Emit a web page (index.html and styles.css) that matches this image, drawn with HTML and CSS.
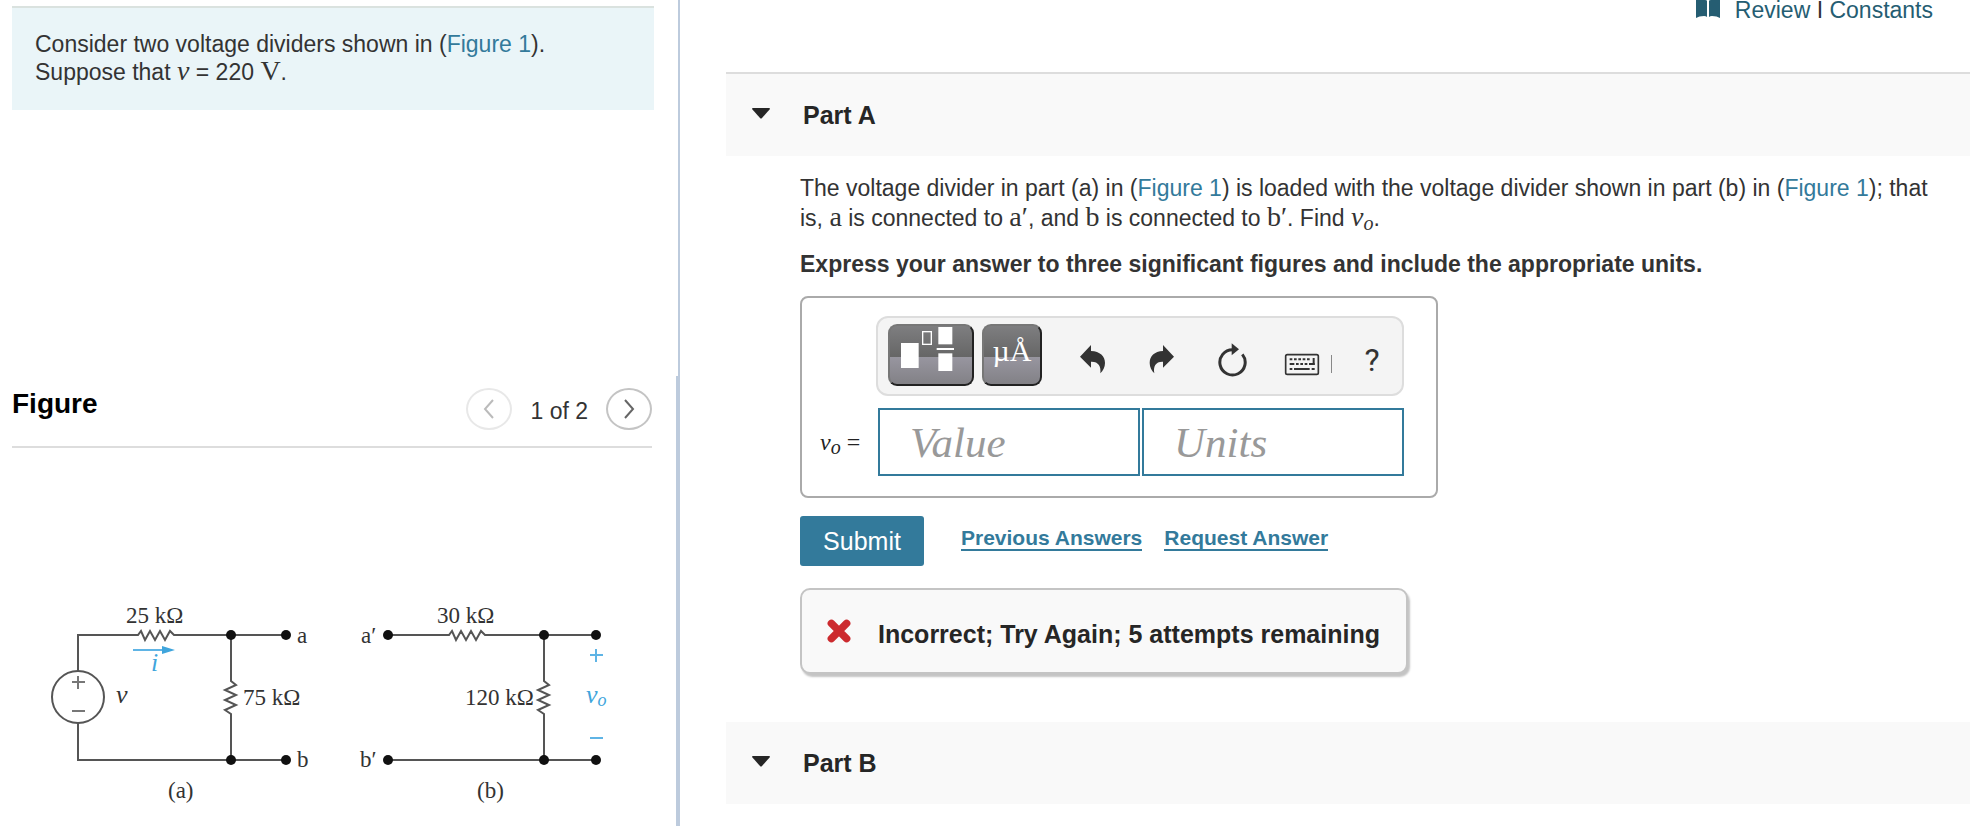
FILE: index.html
```html
<!DOCTYPE html>
<html lang="en">
<head>
  <meta charset="UTF-8">
  <title>Voltage Dividers</title>
  <link rel="stylesheet" href="styles.css">
</head>
<body>
  <div class="page">

    <!-- Problem statement and figure -->
    <aside class="sidebar">
      <div class="problem-pane">
        <div class="problem">
          <p>Consider two voltage dividers shown in (<a href="#figure">Figure 1</a>). Suppose that <i class="math">v</i> = 220 <span class="math">V</span>.</p>
        </div>
      </div>

      <section class="figure-pane" id="figure">
        <header class="figure-header">
          <h2>Figure</h2>
          <div class="pager">
            <button type="button" class="pager-button" aria-label="Previous figure" disabled>
              <svg viewBox="0 0 12 20"><path d="M10 1 L2 10 L10 19"/></svg>
            </button>
            <span class="pager-count">1 of 2</span>
            <button type="button" class="pager-button" aria-label="Next figure">
              <svg viewBox="0 0 12 20"><path d="M2 1 L10 10 L2 19"/></svg>
            </button>
          </div>
        </header>

        <svg class="circuit" viewBox="12 600 640 210" role="img" aria-label="Two voltage dividers">
          <!-- (a) -->
          <g class="wire">
            <path d="M78 671 V635 H138 l3 -4 4 9 5 -9 5 9 5 -9 5 9 5 -9 4 4 H286"/>
            <path d="M78 723 V760 H286"/>
            <path d="M231 635 V681 l5 4 -11 5 11 5 -11 5 11 5 -11 5 6 4 V760"/>
            <circle cx="78" cy="697" r="26"/>
          </g>
          <path class="sign" d="M72 682 h13 M78 676 v13 M72 711 h13"/>
          <g class="node">
            <circle cx="231" cy="635" r="5"/>
            <circle cx="286" cy="635" r="5"/>
            <circle cx="231" cy="760" r="5"/>
            <circle cx="286" cy="760" r="5"/>
          </g>
          <g class="blue-line">
            <path d="M133 650 h34"/>
            <path class="arrow-head" d="M162 646 L175 650 L162 654 Z"/>
          </g>
          <text x="126" y="623">25 kΩ</text>
          <text x="243" y="705">75 kΩ</text>
          <text x="116" y="703" class="var">v</text>
          <text x="151" y="671" class="var blue">i</text>
          <text x="297" y="643">a</text>
          <text x="297" y="767">b</text>
          <text x="168" y="798">(a)</text>

          <!-- (b) -->
          <g class="wire">
            <path d="M388 635 H449 l3 -4 4 9 5 -9 5 9 5 -9 5 9 5 -9 4 4 H596"/>
            <path d="M388 760 H596"/>
            <path d="M544 635 V681 l5 4 -11 5 11 5 -11 5 11 5 -11 5 6 4 V760"/>
          </g>
          <g class="node">
            <circle cx="388" cy="635" r="5"/>
            <circle cx="544" cy="635" r="5"/>
            <circle cx="596" cy="635" r="5"/>
            <circle cx="388" cy="760" r="5"/>
            <circle cx="544" cy="760" r="5"/>
            <circle cx="596" cy="760" r="5"/>
          </g>
          <path class="blue-line" d="M590 655 h13 M596 649 v13 M590 738 h13"/>
          <text x="437" y="623">30 kΩ</text>
          <text x="465" y="705">120 kΩ</text>
          <text x="361" y="643">a′</text>
          <text x="360" y="767">b′</text>
          <text x="477" y="798">(b)</text>
          <text x="586" y="703" class="var blue">v<tspan class="sub" dy="3">o</tspan></text>
        </svg>
      </section>
    </aside>

    <!-- Questions -->
    <main class="content">
      <nav class="resources">
        <svg class="book" viewBox="0 0 24 18">
          <path d="M0 0 H9 Q11 0 11 1 V17 Q10 16 8 16 Q3 16 0 18 Z"/>
          <path d="M24 0 H15 Q13 0 13 1 V17 Q14 16 16 16 Q21 16 24 18 Z"/>
        </svg>
        <a href="#">Review</a> I <a href="#">Constants</a>
      </nav>

      <section class="part">
        <header class="part-header part-header-first">
          <svg class="caret" viewBox="0 0 18 11"><path d="M1 0 H17 Q18 0 18 1 L10 10 Q9 11 8 10 L0 1 Q0 0 1 0 Z"/></svg>
          <h2>Part A</h2>
        </header>

        <div class="part-body">
          <p>The voltage divider in part (a) in (<a href="#figure">Figure 1</a>) is loaded with the voltage divider shown in part (b) in (<a href="#figure">Figure 1</a>); that is, <span class="math">a</span> is connected to <span class="math">a′</span>, and <span class="math">b</span> is connected to <span class="math">b′</span>. Find <i class="math">v<sub>o</sub></i>.</p>
          <p class="instructions">Express your answer to three significant figures and include the appropriate units.</p>

          <form>
            <div class="answer">
              <div class="toolbar">
                <button type="button" class="palette templates" aria-label="Templates">
                  <svg viewBox="300 108 246 174">
                    <rect x="333" y="159" width="53" height="75"/>
                    <rect class="outline" x="398" y="125" width="26" height="38"/>
                    <rect x="445" y="111" width="42" height="52"/>
                    <rect x="440" y="174" width="52" height="6"/>
                    <rect x="445" y="190" width="42" height="53"/>
                  </svg>
                </button>
                <button type="button" class="palette symbols" aria-label="Symbols">µÅ</button>
                <div class="tools">
                  <button type="button" class="tool" aria-label="Undo">
                    <svg viewBox="852 159 108 108"><path d="M870 203 L903 168 V186 C930 187 945 202 945 222 C945 234 939 245 931 253 C934 232 925 217 903 218 V236 Z"/></svg>
                  </button>
                  <button type="button" class="tool" aria-label="Redo">
                    <svg viewBox="135 159 108 108"><path d="M225 203 L192 168 V186 C166 187 152 202 152 222 C152 234 158 245 166 253 C162 232 170 217 192 218 V236 Z"/></svg>
                  </button>
                  <button type="button" class="tool" aria-label="Reset">
                    <svg viewBox="345 159 108 108">
                      <path class="ring" d="M430 196 A38 38 0 1 1 401 182"/>
                      <path d="M398 163 L420 181 L398 199 Z"/>
                    </svg>
                  </button>
                  <button type="button" class="tool" aria-label="Keyboard">
                    <svg viewBox="553 159 108 108">
                      <rect class="case" x="558" y="197" width="98" height="59" rx="5"/>
                      <path class="keys" d="M570 211 h8 M583 211 h8 M596 211 h8 M609 211 h8 M622 211 h8 M570 225 h14 M589 225 h8 M602 225 h8 M615 225 h8 M628 225 h17 M570 240 h8 M583 240 h47 M636 240 h9"/>
                      <path class="enter" d="M642 207 V228"/>
                    </svg>
                  </button>
                  <span class="separator"></span>
                  <button type="button" class="tool help" aria-label="Help">?</button>
                </div>
              </div>
              <label class="answer-label" for="value"><i>v<sub>o</sub></i> =</label>
              <div class="fields">
                <input type="text" id="value" placeholder="Value">
                <input type="text" aria-label="Units" placeholder="Units">
              </div>
            </div>

            <div class="actions">
              <button type="submit" class="submit">Submit</button>
              <a href="#">Previous Answers</a>
              <a href="#">Request Answer</a>
            </div>
          </form>

          <div class="feedback">
            <svg viewBox="0 0 24 24"><path d="M5 5 L19 19 M19 5 L5 19"/></svg>
            <p>Incorrect; Try Again; 5 attempts remaining</p>
          </div>
        </div>
      </section>

      <section class="part">
        <header class="part-header">
          <svg class="caret" viewBox="0 0 18 11"><path d="M1 0 H17 Q18 0 18 1 L10 10 Q9 11 8 10 L0 1 Q0 0 1 0 Z"/></svg>
          <h2>Part B</h2>
        </header>
      </section>
    </main>
  </div>
</body>
</html>
```
FILE: styles.css
```css
*, *:before,
*:after {
  box-sizing: border-box;
}

body {
  margin: 0;
  background: #fff;
  color: #333;
  font: 400 23px/30px 'Liberation Sans', Arial, sans-serif;
}

h2, p {
  margin: 0;
}

a {
  color: #337a9b;
  text-decoration: none;
}

button {
  padding: 0;
  border: 0;
  background: none;
  font-family: inherit;
  cursor: pointer;
}

svg {
  display: block;
}

.page {
  display: grid;
  grid-template-columns: 680px 1fr;
  min-height: 100vh;
}

.math {
  font-family: 'Liberation Serif', 'Times New Roman', serif;
  font-size: 28px;
  line-height: 0;
}

sub {
  font-size: 20px;
  line-height: 0;
  vertical-align: -4px;
}

/* Sidebar */

.sidebar {
  display: flex;
  flex-direction: column;
}

.problem-pane {
  min-height: 376px;
  padding: 6px 24px 0 12px;
  border-right: 2px solid #bdcbdd;
}

.problem {
  padding: 22px 80px 24px 23px;
  border-top: 2px solid #dae2df;
  background: #eaf5f8;
  line-height: 28px;
}

.figure-pane {
  flex: 1;
  padding: 12px 24px 0 12px;
  border-right: 4px solid #bdcbdd;
}

.figure-header {
  display: flex;
  justify-content: space-between;
  align-items: flex-start;
  height: 60px;
  border-bottom: 2px solid #ddd;
}

.figure-header h2 {
  color: #000;
  font-size: 28px;
  line-height: 32px;
}

.pager {
  display: flex;
  align-items: center;
}

.pager-count {
  padding: 4px 18px 0;
}

.pager-button {
  display: flex;
  justify-content: center;
  align-items: center;
  width: 46px;
  height: 42px;
  border: 2px solid #c4c4c4;
  border-radius: 50%;
}

.pager-button:disabled {
  border-color: #e8e8e8;
}

.pager-button svg {
  width: 12px;
  height: 20px;
  fill: none;
  stroke: #666;
  stroke-width: 2;
}

.pager-button:disabled svg {
  stroke: #bbb;
}

.circuit {
  width: 100%;
  max-width: 640px;
  margin-top: 152px;
  font: 23px 'Liberation Serif', 'Times New Roman', serif;
  fill: #333;
}

.circuit .wire {
  fill: none;
  stroke: #555;
  stroke-width: 2;
}

.circuit .sign {
  stroke: #777;
  stroke-width: 2;
}

.circuit .node {
  fill: #111;
}

.circuit .var {
  font-size: 26px;
  font-style: italic;
}

.circuit .blue {
  fill: #3fa5dc;
}

.circuit .blue-line {
  stroke: #5fb4e5;
  stroke-width: 2;
}

.circuit .arrow-head {
  fill: #3fa5dc;
  stroke: none;
}

.circuit .sub {
  font-size: 18px;
}

/* Content */

.content {
  min-width: 0;
  padding-left: 46px;
}

.resources {
  height: 72px;
  padding-right: 37px;
  line-height: 20px;
  text-align: right;
}

.resources a {
  color: #255d72;
}

.book {
  display: inline-block;
  width: 24px;
  height: 18px;
  margin-right: 8px;
  fill: #255d72;
  vertical-align: top;
}

.part-header {
  display: flex;
  align-items: center;
  height: 82px;
  padding-left: 26px;
  background: #f9f9f9;
}

.part-header-first {
  height: 84px;
  border-top: 2px solid #ddd;
}

.part-header h2 {
  color: #262626;
  font-size: 25px;
  line-height: 30px;
}

.caret {
  width: 18px;
  height: 11px;
  margin: 0 33px 3px 0;
  fill: #262626;
}

.part-body {
  padding: 17px 20px 48px 74px;
}

.instructions {
  margin-top: 16px;
  font-weight: 700;
}

.answer {
  display: grid;
  grid-template-columns: 56px 528px;
  row-gap: 12px;
  width: fit-content;
  margin-top: 17px;
  padding: 18px 32px 20px 18px;
  border: 2px solid #aaa;
  border-radius: 8px;
}

.toolbar {
  grid-column: 2;
  display: flex;
  height: 80px;
  padding: 6px 0 6px 10px;
  border: 2px solid #ddd;
  border-radius: 12px;
  background: #f4f4f4;
}

.palette {
  flex-shrink: 0;
  height: 62px;
  margin-right: 8px;
  border: 2px solid;
  border-color: #777 #222 #222 #777;
  border-radius: 9px;
  background: linear-gradient(#7e7e80, #666 53%, #9896a0 53%, #828186);
  color: #fff;
}

.templates {
  width: 86px;
}

.templates svg {
  fill: #fff;
}

.templates .outline {
  fill: none;
  stroke: #fff;
  stroke-width: 4;
}

.symbols {
  width: 60px;
  padding-bottom: 8px;
  font: 30px/50px 'Liberation Serif', 'Times New Roman', serif;
}

.tools {
  display: flex;
  align-items: center;
  margin-left: 14px;
  padding-top: 8px;
}

.tool {
  display: flex;
  justify-content: center;
  flex-shrink: 0;
  width: 56px;
}

.tool + .tool {
  margin-left: 14px;
}

.tool svg {
  width: 36px;
  height: 36px;
  fill: #333;
}

.tool .ring {
  fill: none;
  stroke: #333;
  stroke-width: 9;
}

.tool .case {
  fill: none;
  stroke: #333;
  stroke-width: 5;
}

.tool .keys,
.tool .enter {
  stroke: #333;
  stroke-width: 6;
}

.separator {
  width: 1px;
  height: 18px;
  margin: 8px 12px 0 1px;
  background: #888;
}

.help {
  color: #333;
  font: 32px/36px Roboto, sans-serif;
}

.answer-label {
  align-self: center;
  color: #222;
  font: 24px/30px 'Liberation Serif', 'Times New Roman', serif;
}

.fields {
  display: flex;
  gap: 2px;
  padding-left: 2px;
}

.fields input {
  flex: 1;
  min-width: 0;
  height: 68px;
  padding: 0 30px;
  border: 2px solid #337a9b;
  border-radius: 0;
  color: #333;
  font: italic 43px 'Liberation Serif', 'Times New Roman', serif;
}

.fields input::placeholder {
  color: #999;
}

.actions {
  display: flex;
  align-items: center;
  margin-top: 18px;
}

.actions a {
  margin: 0 22px 4px 0;
  border-bottom: 2px solid #337a9b;
  font-size: 21px;
  font-weight: 700;
  line-height: 22px;
}

.submit {
  width: 124px;
  height: 50px;
  margin-right: 37px;
  border-radius: 3px;
  background: #337a9b;
  color: #fff;
  font-size: 25px;
}

.feedback {
  display: flex;
  align-items: center;
  width: fit-content;
  height: 86px;
  margin-top: 22px;
  padding: 0 26px 0 24px;
  border: 2px solid #c4c4c4;
  border-radius: 10px;
  background: #f9f9f9;
  box-shadow: 2px 3px 2px #c4c4c4;
  color: #262626;
  font-size: 25px;
  font-weight: 700;
}

.feedback p {
  padding-top: 6px;
}

.feedback svg {
  width: 26px;
  height: 26px;
  margin-right: 26px;
  fill: none;
  stroke: #cc2a2e;
  stroke-width: 7;
  stroke-linecap: round;
}
```
